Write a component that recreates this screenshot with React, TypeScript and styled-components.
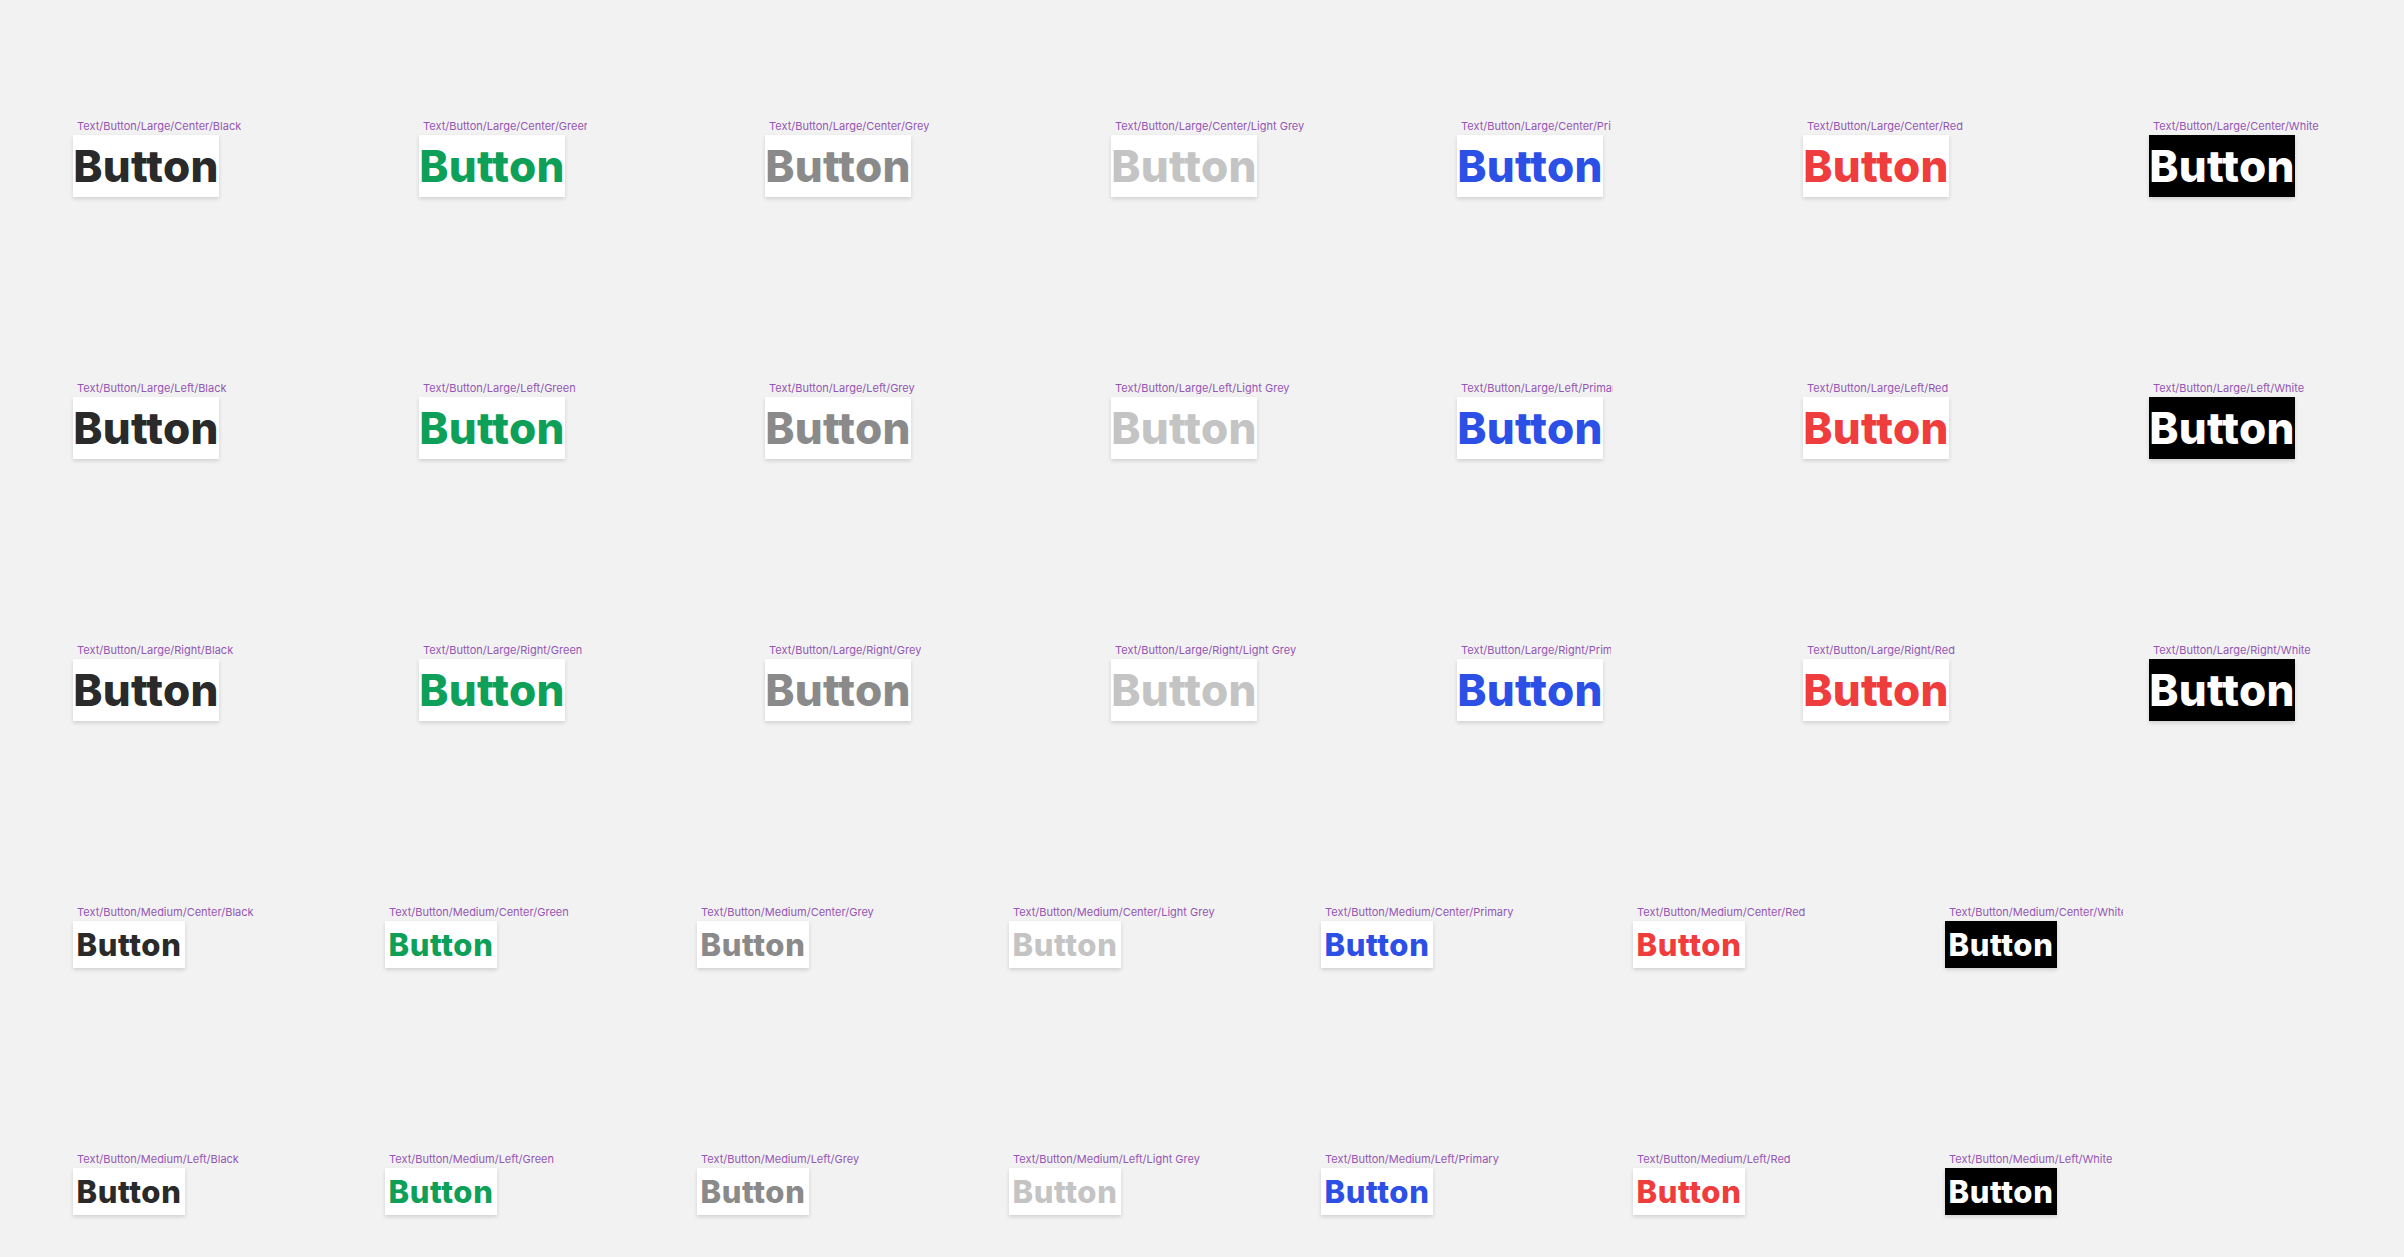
import { FC } from "react";
import styled, { createGlobalStyle } from "styled-components";

type Size = "Large" | "Medium";
type Tone = "Black" | "Green" | "Grey" | "Light Grey" | "Primary" | "Red" | "White";

const tones: Tone[] = ["Black", "Green", "Grey", "Light Grey", "Primary", "Red", "White"];

const toneColor: Record<Tone, string> = {
  Black: "#2a2a2a",
  Green: "#0e9f59",
  Grey: "#8a8a8a",
  "Light Grey": "#c4c4c4",
  Primary: "#2c50e6",
  Red: "#ef3c3c",
  White: "#ffffff",
};

// label widths where the frame name gets cut off on the canvas
const labelClip: Record<string, number> = {
  "Large/Center/Green": 168,
  "Large/Center/Primary": 154,
  "Large/Left/Primary": 156,
  "Large/Right/Primary": 154,
  "Medium/Center/White": 178,
};

const rows: { size: Size; align: string }[] = [
  { size: "Large", align: "Center" },
  { size: "Large", align: "Left" },
  { size: "Large", align: "Right" },
  { size: "Medium", align: "Center" },
  { size: "Medium", align: "Left" },
];

const GlobalStyle = createGlobalStyle`
  html, body {
    margin: 0;
    background: #f2f2f2;
  }
  body {
    font-family: Inter, "Noto Sans", sans-serif;
  }
`;

const Board = styled.div`
  min-height: 1257px;
  box-sizing: border-box;
  padding: 119px 0 0 73px;
  display: flex;
  flex-direction: column;
  gap: 184px;
  overflow: hidden;
`;

const Row = styled.div`
  display: flex;
`;

const Cell = styled.div<{ $size: Size }>`
  flex: 0 0 ${(p) => (p.$size === "Large" ? 346 : 312)}px;
  display: flex;
  flex-direction: column;
  align-items: flex-start;
`;

const FrameLabel = styled.div<{ $clip?: number }>`
  font-family: Inter, sans-serif;
  font-size: 11px;
  line-height: 14px;
  height: 14px;
  margin-bottom: 2px;
  padding-left: 4px;
  color: #9456b4;
  white-space: nowrap;
  overflow: hidden;
  box-sizing: border-box;
  max-width: ${(p) => (p.$clip ? `${p.$clip}px` : "none")};
`;

const ButtonText = styled.div<{ $size: Size; $tone: Tone }>`
  width: ${(p) => (p.$size === "Large" ? 146 : 112)}px;
  height: ${(p) => (p.$size === "Large" ? 62 : 47)}px;
  display: flex;
  align-items: center;
  justify-content: center;
  background: ${(p) => (p.$tone === "White" ? "#000000" : "#ffffff")};
  color: ${(p) => toneColor[p.$tone]};
  box-shadow: 0 2px 4px rgba(0, 0, 0, 0.14);
  font-family: Inter, sans-serif;
  font-weight: 800;
  font-size: ${(p) => (p.$size === "Large" ? 44 : 31)}px;
  letter-spacing: ${(p) => (p.$size === "Large" ? "0.3px" : "0.6px")};
  white-space: nowrap;
`;

const TextButtonItem: FC<{ size: Size; align: string; tone: Tone }> = ({ size, align, tone }) => {
  const key = `${size}/${align}/${tone}`;
  return (
    <Cell $size={size}>
      <FrameLabel $clip={labelClip[key]}>Text/Button/{key}</FrameLabel>
      <ButtonText $size={size} $tone={tone}>
        Button
      </ButtonText>
    </Cell>
  );
};

export default function App() {
  return (
    <>
      <GlobalStyle />
      <Board>
        {rows.map((r) => (
          <Row key={`${r.size}-${r.align}`}>
            {tones.map((t) => (
              <TextButtonItem key={t} size={r.size} align={r.align} tone={t} />
            ))}
          </Row>
        ))}
      </Board>
    </>
  );
}
